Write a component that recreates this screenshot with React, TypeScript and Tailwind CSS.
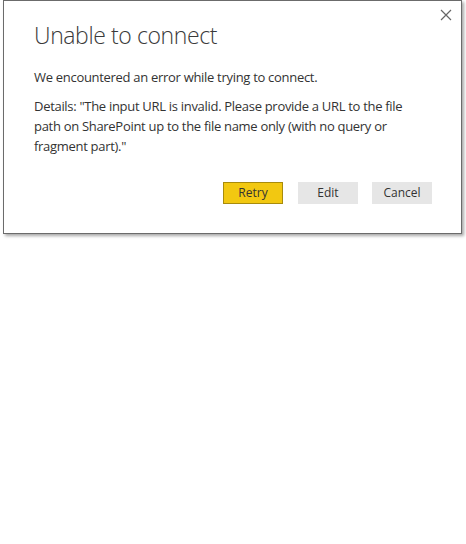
export default function App() {
  return (
    <div className="h-[544px] w-[466px] bg-white" style={{ fontFamily: '"Open Sans", "Noto Sans", sans-serif' }}>
      <div className="ml-[3px] w-[459px] border border-[#6b6b6b] bg-white shadow-[2px_2px_3px_rgba(0,0,0,0.35)]">
        <div className="relative h-[232px] pl-[30px] pr-[29px] pt-[18px]">
          <button className="absolute right-[7px] top-[6px] flex h-[16px] w-[16px] items-center justify-center text-[#666]">
            <svg width="12" height="12" viewBox="0 0 12 12" fill="none" stroke="currentColor" strokeWidth="1.2">
              <path d="M1 1L11 11M11 1L1 11" />
            </svg>
          </button>
          <h1 className="text-[23px] font-light leading-[32px] tracking-[-0.4px] text-[#3a3a3a]">Unable to connect</h1>
          <p className="mt-[16px] text-[13px] leading-[20px] tracking-[-0.3px] text-[#333]">We encountered an error while trying to connect.</p>
          <p className="mt-[9px] w-[380px] text-[13px] leading-[20px] tracking-[-0.3px] text-[#333]">
            Details: "The input URL is invalid. Please provide a URL to the file path on SharePoint up to the file name only (with no query or fragment part)."
          </p>
          <div className="mt-[26px] flex justify-end gap-[14px]">
            <button className="mr-[1px] h-[22px] w-[60px] border border-[#a88b0c] bg-[#f2c811] text-[12px] text-[#333]">Retry</button>
            <button className="h-[22px] w-[60px] bg-[#e6e6e6] text-[12px] text-[#333]">Edit</button>
            <button className="h-[22px] w-[60px] bg-[#e6e6e6] text-[12px] text-[#333]">Cancel</button>
          </div>
        </div>
      </div>
    </div>
  );
}
